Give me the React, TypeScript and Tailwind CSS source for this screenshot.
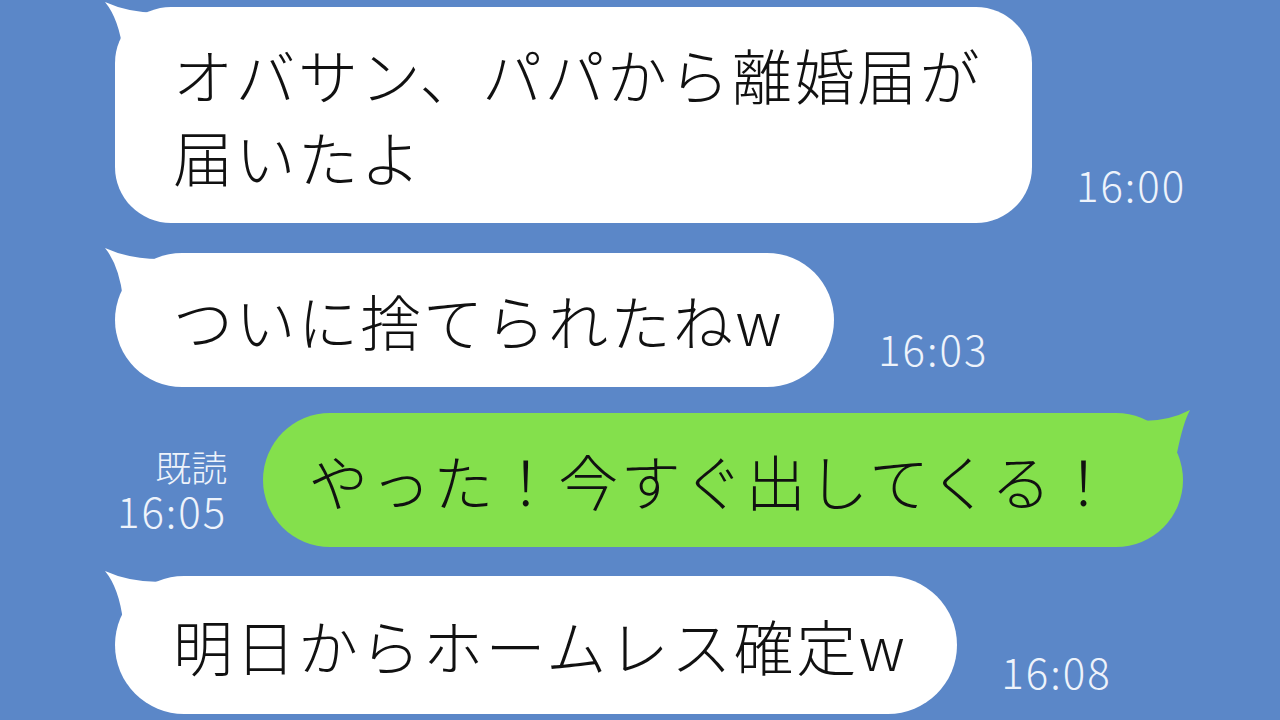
import React from "react";

function WhiteTail() {
  return (
    <svg
      className="absolute left-[-14px] top-[-8px] w-[64px] h-[60px]"
      viewBox="0 0 64 60"
      aria-hidden="true"
    >
      <path d="M22 53 Q18 20 4 3 Q28 14 59 14 L59 53 Z" fill="#ffffff" />
    </svg>
  );
}

function GreenTail() {
  return (
    <svg
      className="absolute right-[-14px] top-[-8px] w-[64px] h-[60px]"
      viewBox="0 0 64 60"
      aria-hidden="true"
    >
      <path d="M44 48 Q50 18 57 5 Q36 16 10 16 L10 48 Z" fill="#84e04c" />
    </svg>
  );
}

const msgText =
  "text-[60px] leading-[82px] tracking-[2.5px] text-[#111111] whitespace-nowrap font-light";
const timeText =
  "text-[42px] leading-none tracking-[2px] text-[#eef3fb] whitespace-nowrap font-light";

export default function App() {
  return (
    <div className="w-[1280px] h-[720px] bg-[#5b87c8] overflow-hidden flex flex-col font-['Noto_Sans_CJK_JP','Noto_Sans',sans-serif]">
      {/* Row 1 */}
      <div className="flex items-end pl-[115px] pt-[7px]">
        <div className="relative bg-white rounded-[56px] pl-[58px] pr-[50px] py-[26px]">
          <WhiteTail />
          <p className={`relative ${msgText}`}>
            オバサン、パパから離婚届が
            <br />
            届いたよ
          </p>
        </div>
        <span className={`ml-[44px] mb-[18px] ${timeText}`}>16:00</span>
      </div>

      {/* Row 2 */}
      <div className="flex items-end pl-[115px] mt-[30px]">
        <div className="relative bg-white rounded-[67px] pl-[58px] pr-[50px] py-[26px]">
          <WhiteTail />
          <p className={`relative ${msgText}`}>ついに捨てられたねw</p>
        </div>
        <span className={`ml-[44px] mb-[18px] ${timeText}`}>16:03</span>
      </div>

      {/* Row 3 */}
      <div className="flex items-end justify-end pr-[97px] mt-[26px]">
        <div className="flex flex-col items-end mr-[36px] mb-[13px]">
          <span className="text-[36px] leading-[40px] text-[#eef3fb] font-light">
            既読
          </span>
          <span className="text-[42px] leading-[48px] tracking-[2px] text-[#eef3fb] whitespace-nowrap font-light">
            16:05
          </span>
        </div>
        <div className="relative bg-[#84e04c] rounded-[67px] pl-[45px] pr-[67px] py-[26px]">
          <GreenTail />
          <p className={`relative ${msgText}`}>やった！今すぐ出してくる！</p>
        </div>
      </div>

      {/* Row 4 */}
      <div className="flex items-end pl-[115px] mt-[29px]">
        <div className="relative bg-white rounded-[69px] pl-[58px] pr-[50px] py-[28px]">
          <WhiteTail />
          <p className={`relative ${msgText}`}>明日からホームレス確定w</p>
        </div>
        <span className={`ml-[44px] mb-[22px] ${timeText}`}>16:08</span>
      </div>
    </div>
  );
}
